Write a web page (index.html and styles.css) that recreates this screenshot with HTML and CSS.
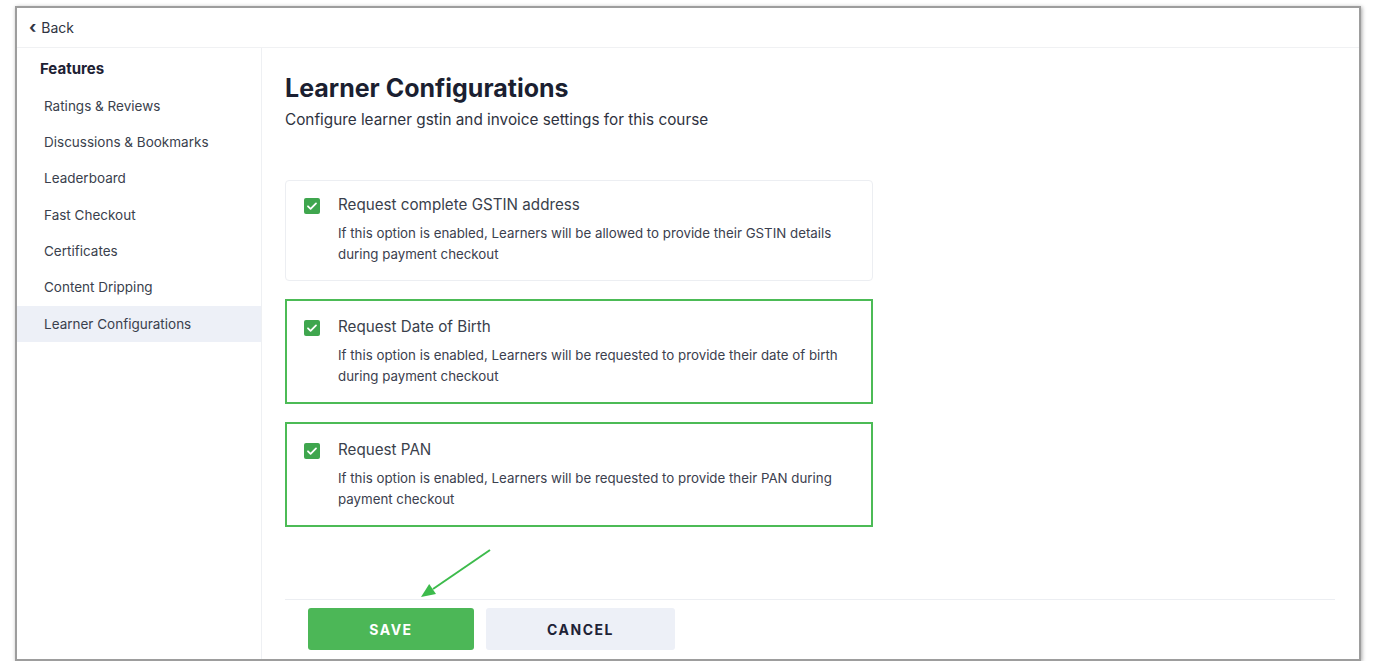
FILE: index.html
```html
<!DOCTYPE html>
<html lang="en">
<head>
  <meta charset="UTF-8">
  <meta name="viewport" content="width=device-width, initial-scale=1.0">
  <title>Learner Configurations</title>
  <link rel="stylesheet" href="styles.css">
</head>
<body>
  <div class="window">
    <div class="topbar">
      <a class="back" href="#"><span class="back-arrow">&lsaquo;</span> Back</a>
    </div>

    <div class="layout">
      <aside class="sidebar">
        <h3>Features</h3>
        <ul class="menu">
          <li>Ratings &amp; Reviews</li>
          <li>Discussions &amp; Bookmarks</li>
          <li>Leaderboard</li>
          <li>Fast Checkout</li>
          <li>Certificates</li>
          <li>Content Dripping</li>
          <li class="active">Learner Configurations</li>
        </ul>
      </aside>

      <main class="content">
        <div class="content-body">
          <h1>Learner Configurations</h1>
          <p class="subtitle">Configure learner gstin and invoice settings for this course</p>

          <div class="options">
            <label class="option">
              <span class="checkbox">
                <svg viewBox="0 0 16 16" width="16" height="16"><path d="M4 8.3l2.6 2.5L12 5.4" fill="none" stroke="#fff" stroke-width="1.8" stroke-linecap="round" stroke-linejoin="round"/></svg>
              </span>
              <span class="option-text">
                <span class="option-title">Request complete GSTIN address</span>
                <span class="option-desc">If this option is enabled, Learners will be allowed to provide their GSTIN details during payment checkout</span>
              </span>
            </label>

            <label class="option marked">
              <span class="checkbox">
                <svg viewBox="0 0 16 16" width="16" height="16"><path d="M4 8.3l2.6 2.5L12 5.4" fill="none" stroke="#fff" stroke-width="1.8" stroke-linecap="round" stroke-linejoin="round"/></svg>
              </span>
              <span class="option-text">
                <span class="option-title">Request Date of Birth</span>
                <span class="option-desc">If this option is enabled, Learners will be requested to provide their date of birth during payment checkout</span>
              </span>
            </label>

            <label class="option marked">
              <span class="checkbox">
                <svg viewBox="0 0 16 16" width="16" height="16"><path d="M4 8.3l2.6 2.5L12 5.4" fill="none" stroke="#fff" stroke-width="1.8" stroke-linecap="round" stroke-linejoin="round"/></svg>
              </span>
              <span class="option-text">
                <span class="option-title">Request PAN</span>
                <span class="option-desc">If this option is enabled, Learners will be requested to provide their PAN during payment checkout</span>
              </span>
            </label>
          </div>
        </div>

        <div class="actions">
          <button class="btn btn-save">SAVE</button>
          <button class="btn btn-cancel">CANCEL</button>
        </div>
      </main>
    </div>

    <!-- annotation arrow pointing at the save button -->
    <svg class="pointer" width="75" height="52" viewBox="0 0 75 52">
      <line x1="71" y1="2" x2="14" y2="41" stroke="#3dbb4c" stroke-width="2"/>
      <path d="M2 49 L10.2 36.1 L17 46.1 Z" fill="#3dbb4c"/>
    </svg>
  </div>
</body>
</html>
```

FILE: styles.css
```css
* {
  margin: 0;
  padding: 0;
  box-sizing: border-box;
  font-family: "Inter", "Noto Sans", sans-serif;
}

body {
  background: #fff;
  color: #333;
  padding: 6px 0 0 15px;
}

.window {
  position: relative;
  width: 1346px;
  height: 655px;
  background: #fff;
  border: 2px solid #9d9d9d;
  box-shadow: 1px 1px 4px rgba(0, 0, 0, 0.35);
  display: flex;
  flex-direction: column;
}

.topbar {
  height: 40px;
  border-bottom: 1px solid #f0f1f3;
  display: flex;
  align-items: center;
  padding-left: 12px;
  padding-bottom: 2px;
}

.back {
  color: #2f3442;
  text-decoration: none;
  font-size: 14px;
}

.back-arrow {
  font-size: 17px;
  font-weight: bold;
  margin-right: 1px;
}

.layout {
  flex: 1;
  display: flex;
  min-height: 0;
}

.sidebar {
  width: 245px;
  border-right: 1px solid #eef0f3;
  padding-top: 10px;
}

.sidebar h3 {
  font-size: 15px;
  line-height: 22px;
  font-weight: 700;
  color: #1d2133;
  padding-left: 23px;
  margin-bottom: 8px;
}

.menu {
  list-style: none;
}

.menu li {
  height: 36.2px;
  line-height: 36px;
  padding-left: 27px;
  font-size: 13.5px;
  color: #3a3f4d;
}

.menu li.active {
  background: #edf0f7;
  margin-top: 1px;
}

.content {
  flex: 1;
  display: flex;
  flex-direction: column;
  padding: 0 24px 0 23px;
}

.content-body {
  flex: 1;
  padding-top: 24px;
}

.content h1 {
  font-size: 25px;
  line-height: 32px;
  font-weight: 700;
  color: #1b1f31;
}

.subtitle {
  font-size: 15.3px;
  line-height: 22px;
  margin-top: 5px;
  color: #2e3240;
}

.options {
  width: 588px;
  margin-top: 49px;
  display: flex;
  flex-direction: column;
  gap: 18px;
}

.option {
  display: flex;
  gap: 18px;
  border: 1px solid #eceef2;
  border-radius: 4px;
  padding: 13px 20px 15px 18px;
}

.option.marked {
  border: 2px solid #4cbb56;
  border-radius: 0;
  padding: 15px 19px 15px 17px;
}

.checkbox {
  flex: none;
  width: 16px;
  height: 16px;
  margin-top: 4px;
  border-radius: 2px;
  background: #3fa64e;
}

.checkbox svg {
  display: block;
}

.option-text {
  display: flex;
  flex-direction: column;
  gap: 7px;
}

.option-title {
  font-size: 15.2px;
  line-height: 22px;
  color: #3a3f4c;
}

.option-desc {
  font-size: 13.3px;
  line-height: 21px;
  color: #3b404e;
}

.actions {
  border-top: 1px solid #eceef2;
  padding: 8px 0 9px 23px;
  display: flex;
  gap: 12px;
}

.btn {
  height: 42px;
  border: none;
  border-radius: 3px;
  font-size: 14px;
  font-weight: 700;
  letter-spacing: 1.5px;
  cursor: pointer;
}

.btn-save {
  width: 166px;
  background: #4cb757;
  color: #fff;
}

.btn-cancel {
  width: 189px;
  background: #edf0f7;
  color: #1e2336;
}

.pointer {
  position: absolute;
  left: 402px;
  top: 540px;
}
```
